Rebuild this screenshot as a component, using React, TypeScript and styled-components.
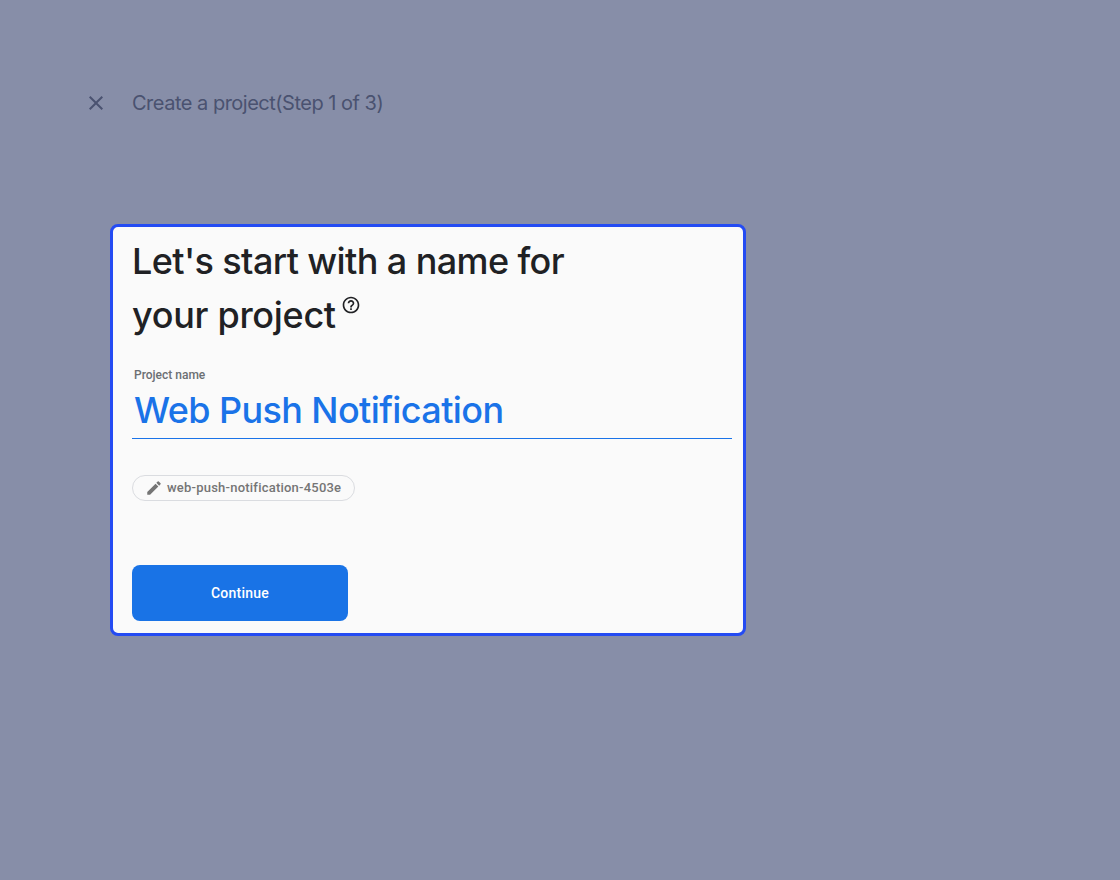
import styled, { createGlobalStyle } from 'styled-components';

const GlobalStyle = createGlobalStyle`
  html, body {
    margin: 0;
    padding: 0;
    height: 100%;
    background-color: #878ea8;
  }
`;

const App = () => {
  return (
    <Page>
      <GlobalStyle />
      <Header>
        <CloseBtn aria-label="Close">
          <svg width="24" height="24" viewBox="0 0 24 24" fill="#4a5270">
            <path d="M19 6.41 17.59 5 12 10.59 6.41 5 5 6.41 10.59 12 5 17.59 6.41 19 12 13.41 17.59 19 19 17.59 13.41 12z" />
          </svg>
        </CloseBtn>
        <HeaderTitle>Create a project(Step 1 of 3)</HeaderTitle>
      </Header>
      <Card>
        <Heading>
          <HeadingLine>Let's start with a name for</HeadingLine>
          <HeadingLine $wide>
            your project
            <HelpIcon width="20" height="20" viewBox="0 0 24 24" fill="#202124">
              <path d="M11 18h2v-2h-2v2zm1-16C6.48 2 2 6.48 2 12s4.48 10 10 10 10-4.48 10-10S17.52 2 12 2zm0 18c-4.41 0-8-3.59-8-8s3.59-8 8-8 8 3.59 8 8-3.59 8-8 8zm0-14c-2.21 0-4 1.79-4 4h2c0-1.1.9-2 2-2s2 .9 2 2c0 2-3 1.75-3 5h2c0-2.25 3-2.5 3-5 0-2.21-1.79-4-4-4z" />
            </HelpIcon>
          </HeadingLine>
        </Heading>
        <Field>
          <FieldLabel>Project name</FieldLabel>
          <FieldValue>Web Push Notification</FieldValue>
        </Field>
        <IdChip>
          <svg width="18" height="18" viewBox="0 0 24 24" fill="#757575">
            <path d="M3 17.25V21h3.75L17.81 9.94l-3.75-3.75L3 17.25zM20.71 7.04a1 1 0 0 0 0-1.41l-2.34-2.34a1 1 0 0 0-1.41 0l-1.83 1.83 3.75 3.75 1.83-1.83z" />
          </svg>
          <ChipText>web-push-notification-4503e</ChipText>
        </IdChip>
        <ContinueBtn>Continue</ContinueBtn>
      </Card>
    </Page>
  );
};

export default App;

const Page = styled.div`
  min-height: 880px;
  box-sizing: border-box;
  padding: 84px 0 0 110px;
  background-color: #878ea8;
  font-family: 'Roboto', sans-serif;
`;

const Header = styled.div`
  height: 38px;
  margin-left: -26px;
  display: flex;
  align-items: center;
  gap: 24px;
`;

const CloseBtn = styled.button`
  width: 24px;
  height: 24px;
  padding: 0;
  border: none;
  background: none;
  display: flex;
`;

const HeaderTitle = styled.div`
  font-family: 'Inter', sans-serif;
  font-size: 20px;
  color: #4a5270;
  letter-spacing: -0.5px;
`;

const Card = styled.div`
  width: 636px;
  height: 412px;
  margin-top: 102px;
  box-sizing: border-box;
  padding: 7px 11px 12px 19px;
  background-color: #fafafa;
  border: 3px solid #244bf3;
  border-radius: 8px;
  display: flex;
  flex-direction: column;
  align-items: flex-start;
`;

const Heading = styled.h1`
  margin: 0;
  font-family: 'Inter', sans-serif;
  font-size: 36px;
  line-height: 54px;
  font-weight: 500;
  color: #202124;
`;

const HeadingLine = styled.div<{ $wide?: boolean }>`
  letter-spacing: ${(p) => (p.$wide ? '-0.3px' : '-0.6px')};
`;

const HelpIcon = styled.svg`
  margin-left: 5px;
  vertical-align: 13px;
`;

const Field = styled.div`
  align-self: stretch;
  margin-top: 25px;
  padding: 0 2px 5px;
  border-bottom: 1px solid #1a73e8;
`;

const FieldLabel = styled.div`
  font-size: 12px;
  line-height: 16px;
  font-weight: 500;
  color: #6b6f73;
`;

const FieldValue = styled.div`
  padding-top: 4px;
  font-family: 'Inter', sans-serif;
  font-size: 36px;
  line-height: 46px;
  font-weight: 500;
  letter-spacing: -0.6px;
  color: #1a73e8;
`;

const IdChip = styled.div`
  height: 26px;
  margin-top: 36px;
  box-sizing: border-box;
  padding: 0 13px 0 12px;
  display: flex;
  align-items: center;
  gap: 4px;
  border: 1px solid #dadce0;
  border-radius: 13px;
`;

const ChipText = styled.span`
  padding-bottom: 2px;
  font-size: 13px;
  font-weight: 500;
  letter-spacing: 0.22px;
  color: #757575;
`;

const ContinueBtn = styled.button`
  width: 216px;
  height: 56px;
  margin-top: auto;
  border: none;
  border-radius: 8px;
  background-color: #1973e6;
  color: #ffffff;
  font-family: 'Roboto', sans-serif;
  font-size: 14px;
  font-weight: 500;
  letter-spacing: 0.25px;
`;
